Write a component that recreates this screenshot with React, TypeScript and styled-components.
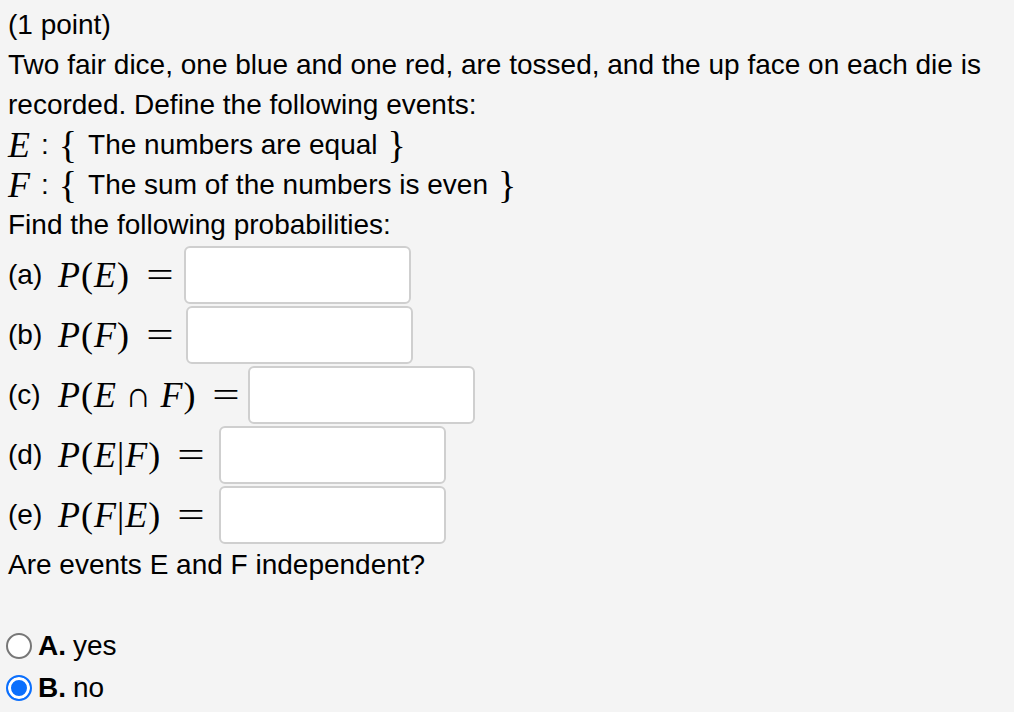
import styled, { createGlobalStyle } from 'styled-components';

const GlobalStyle = createGlobalStyle`
  body {
    margin: 0;
    background: #f4f4f4;
    font-family: "Liberation Sans", Arial, sans-serif;
    color: #000;
  }
`;

const Page = styled.div`
  padding: 5px 8px 0 8px;
  font-size: 28px;
  line-height: 40px;
`;

const Line = styled.div`
  height: 40px;
  white-space: nowrap;
`;

const Math = styled.span`
  font-family: "Liberation Serif", "Times New Roman", serif;
  font-size: 36px;
`;

const MathVar = styled(Math)`
  font-style: italic;
`;

const Brace = styled(Math)`
  font-size: 38px;
  margin: 0 0 0 10px;
`;

const OpenBrace = styled(Math)`
  font-size: 38px;
  margin: 0 11px 0 0;
`;

const EventLine = styled(Line)`
  display: flex;
  align-items: center;
`;

const Colon = styled.span`
  margin: 0 10px 0 11px;
  font-size: 28px;
`;

const AnswerRow = styled.div`
  display: flex;
  align-items: center;
  height: 60px;
`;

const Label = styled.span`
  width: 50px;
  flex-shrink: 0;
`;

const Expr = styled.span`
  font-family: "Liberation Serif", "Times New Roman", serif;
  font-size: 36px;
  white-space: nowrap;
  letter-spacing: 1px;
`;

const Eq = styled.span`
  display: inline-block;
  font-style: normal;
  transform: scaleX(1.35);
  margin: 0 14px 0 20px;
`;

const AnswerInput = styled.input<{ $offset: number }>`
  width: 227px;
  height: 58px;
  box-sizing: border-box;
  margin-left: ${p => p.$offset}px;
  border: 2px solid #cfcfcf;
  border-radius: 6px;
  background: #fff;
`;

const Spacer = styled.div`
  height: 40px;
`;

const Choice = styled.label`
  display: flex;
  align-items: center;
  height: 42px;
  margin-left: -2px;
`;

const Radio = styled.span<{ $checked?: boolean }>`
  width: 26px;
  height: 26px;
  box-sizing: border-box;
  border-radius: 50%;
  border: 2px solid ${p => (p.$checked ? '#0b6ffd' : '#777')};
  background: ${p => (p.$checked ? '#0b6ffd' : '#fff')};
  box-shadow: ${p => (p.$checked ? 'inset 0 0 0 3px #fff' : 'none')};
  margin-right: 6px;
`;

const Letter = styled.b`
  margin-right: 7px;
`;

const rows = [
  { label: '(a)', expr: <><i>P</i>(<i>E</i>)</>, offset: -1 },
  { label: '(b)', expr: <><i>P</i>(<i>F</i>)</>, offset: 1 },
  { label: '(c)', expr: <><i>P</i>(<i>E</i>{'\u2009∩\u2009'}<i>F</i>)</>, offset: -4 },
  { label: '(d)', expr: <><i>P</i>(<i>E</i>|<i>F</i>)</>, offset: 2 },
  { label: '(e)', expr: <><i>P</i>(<i>F</i>|<i>E</i>)</>, offset: 2 },
];

export default function App() {
  return (
    <Page>
      <GlobalStyle />
      <Line>(1 point)</Line>
      <Line>Two fair dice, one blue and one red, are tossed, and the up face on each die is</Line>
      <Line>recorded. Define the following events:</Line>
      <EventLine>
        <MathVar>E</MathVar>
        <Colon>:</Colon>
        <OpenBrace>{'{'}</OpenBrace>
        <span>The numbers are equal</span>
        <Brace>{'}'}</Brace>
      </EventLine>
      <EventLine>
        <MathVar>F</MathVar>
        <Colon>:</Colon>
        <OpenBrace>{'{'}</OpenBrace>
        <span>The sum of the numbers is even</span>
        <Brace>{'}'}</Brace>
      </EventLine>
      <Line>Find the following probabilities:</Line>
      {rows.map(r => (
        <AnswerRow key={r.label}>
          <Label>{r.label}</Label>
          <Expr>
            {r.expr}
            <Eq>=</Eq>
          </Expr>
          <AnswerInput type="text" $offset={r.offset} />
        </AnswerRow>
      ))}
      <Line>Are events E and F independent?</Line>
      <Spacer />
      <Choice>
        <Radio />
        <Letter>A.</Letter> yes
      </Choice>
      <Choice>
        <Radio $checked />
        <Letter>B.</Letter> no
      </Choice>
    </Page>
  );
}
